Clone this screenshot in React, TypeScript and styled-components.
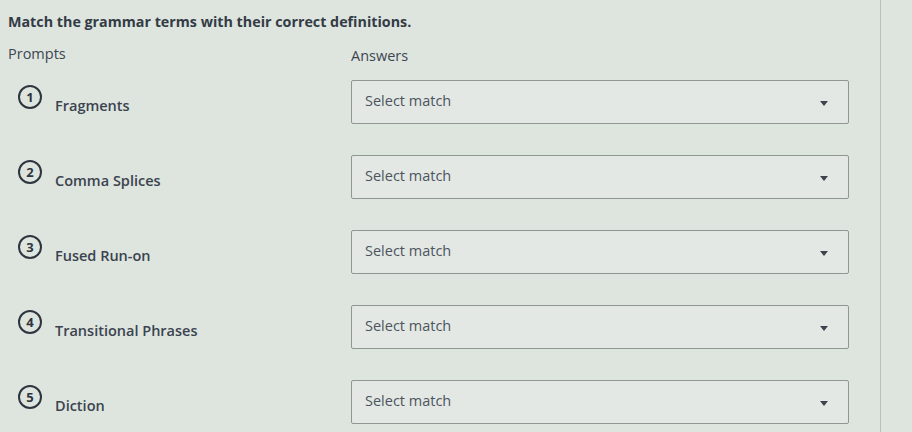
import styled, { createGlobalStyle } from "styled-components";

const prompts = [
  "Fragments",
  "Comma Splices",
  "Fused Run-on",
  "Transitional Phrases",
  "Diction",
];

function App() {
  return (
    <>
      <GlobalStyle />
      <Page>
        <Title>Match the grammar terms with their correct definitions.</Title>
        <Board>
          <ColumnHead>Prompts</ColumnHead>
          <ColumnHead $lower>Answers</ColumnHead>
          {prompts.map((term, i) => (
            <Row key={term}>
              <Prompt>
                <Badge>{i + 1}</Badge>
                <Term>{term}</Term>
              </Prompt>
              <Select>
                <span>Select match</span>
                <Caret />
              </Select>
            </Row>
          ))}
        </Board>
      </Page>
    </>
  );
}

const GlobalStyle = createGlobalStyle`
  html, body {
    margin: 0;
    background: #dee5df;
  }
  body {
    font-family: "Open Sans", "Liberation Sans", sans-serif;
    color: #39424d;
  }
`;

const Page = styled.div`
  width: 881px;
  height: 432px;
  padding: 12px 0 0 8px;
  box-sizing: border-box;
  border-right: 1px solid #b9c1bd;
  overflow: hidden;
`;

const Title = styled.h1`
  margin: 0;
  font-size: 14.3px;
  line-height: 20px;
  font-weight: 700;
  color: #333b45;
`;

const Board = styled.div`
  display: grid;
  grid-template-columns: 343px 498px;
  row-gap: 31px;
  margin-top: 12px;
`;

const ColumnHead = styled.div<{ $lower?: boolean }>`
  font-size: 14.5px;
  line-height: 20px;
  margin-top: ${({ $lower }) => ($lower ? "2px" : "0")};
  margin-bottom: -17px;
  color: #3d4650;
`;

const Row = styled.div`
  display: contents;
`;

const Prompt = styled.div`
  display: flex;
  align-items: flex-start;
  padding: 5px 0 0 10px;
`;

const Badge = styled.span`
  width: 24px;
  height: 24px;
  box-sizing: border-box;
  border: 2px solid #2e353e;
  border-radius: 50%;
  display: flex;
  align-items: center;
  justify-content: center;
  font-size: 13px;
  font-weight: 700;
  color: #2e353e;
  flex-shrink: 0;
`;

const Term = styled.span`
  margin: 11px 0 0 13px;
  font-size: 14.5px;
  line-height: 20px;
  font-weight: 600;
  color: #3a434e;
`;

const Select = styled.div`
  height: 44px;
  box-sizing: border-box;
  border: 1.5px solid #8f9793;
  border-radius: 2px;
  background: #e3e8e4;
  display: flex;
  align-items: center;
  justify-content: space-between;
  padding: 0 20px 0 13px;
  font-size: 14.5px;
  color: #4c545e;

  span {
    margin-top: -4px;
  }
`;

const Caret = styled.i`
  width: 0;
  height: 0;
  border-left: 4px solid transparent;
  border-right: 4px solid transparent;
  border-top: 5px solid #3c434c;
  margin-top: 2px;
`;

export default App;
